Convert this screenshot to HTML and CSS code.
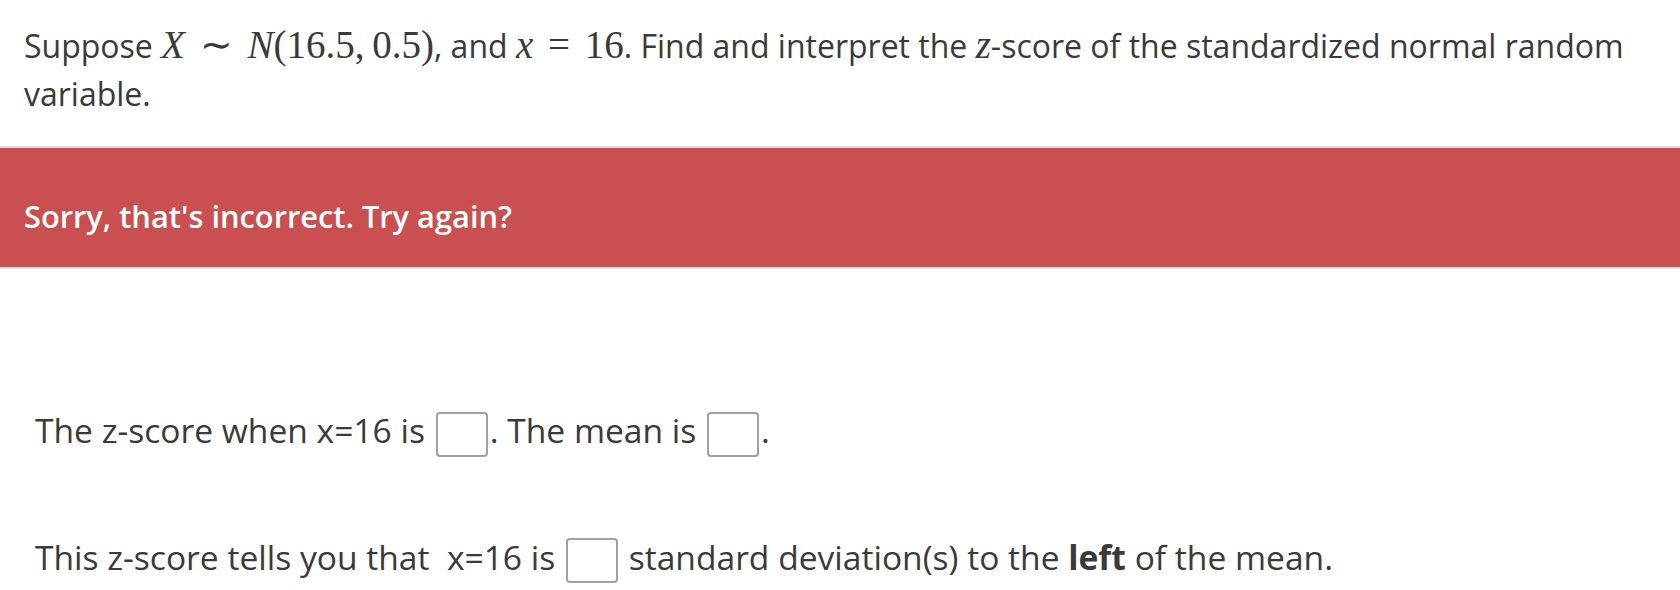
FILE: index.html
```html
<!DOCTYPE html>
<html lang="en">
<head>
  <meta charset="UTF-8" />
  <title>Question</title>
  <link rel="stylesheet" href="styles.css">
</head>
<body>
  <div class="question">
    Suppose <span class="math"><i>X</i> <span class="op">∼</span> <i>N</i>(16.5,&thinsp;0.5)</span>, and <span class="math"><i>x</i> <span class="op">=</span> 16</span>. Find and interpret the <span class="math"><i>z</i></span>-score of the standardized normal random variable.
  </div>

  <div class="feedback">Sorry, that's incorrect. Try again?</div>

  <div class="answers">
    <p class="row">The z-score when x=16 is <input type="text" class="blank">. The mean is <input type="text" class="blank">.</p>
    <p class="row">This z-score tells you that&nbsp; x=16 is <input type="text" class="blank"> standard deviation(s) to the <b>left</b> of the mean.</p>
  </div>
</body>
</html>
```

FILE: styles.css
```css
body {
  margin: 0;
  font-family: "Open Sans", Arial, sans-serif;
  color: #3a3a3a;
  background: #fff;
}

.question {
  padding: 22px 24px 0 24px;
  font-size: 32px;
  line-height: 48px;
}

.math {
  font-family: "Liberation Serif", "Times New Roman", serif;
  font-size: 39px;
  line-height: 40px;
}

.math .op {
  padding: 0 5px;
}

.feedback {
  margin-top: 28px;
  border-top: 2px solid #dcdcdc;
  border-bottom: 2px solid #dcdcdc;
  background: #c94f50;
  color: #fff;
  font-weight: 600;
  font-size: 30.8px;
  line-height: 48px;
  padding: 44px 24px 27px;
}

.answers {
  padding: 137px 24px 0 35px;
  font-size: 33.6px;
}

.row {
  margin: 0 0 76px;
  line-height: 48px;
}

.row:last-child {
  margin-bottom: 0;
}

.blank {
  width: 52px;
  height: 45px;
  box-sizing: border-box;
  border: 2px solid #a0a0a0;
  border-radius: 4px;
  vertical-align: middle;
  margin: 0 2px;
  padding: 0;
}
```
